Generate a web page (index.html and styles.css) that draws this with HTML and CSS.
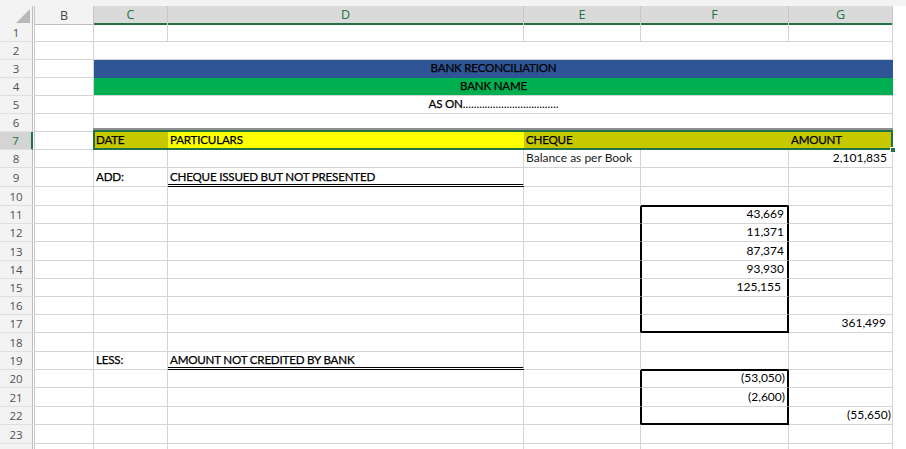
FILE: index.html
```html
<!DOCTYPE html>
<html>
<head>
<meta charset="utf-8">
<link rel="stylesheet" href="styles.css">
</head>
<body>
<div class="top"></div>
<div class="sheet">
  <div class="row hdr">
    <div class="corner"><svg width="14" height="14" viewBox="0 0 14 14"><polygon points="14,0 14,14 0,14" fill="#b9b9b9"/></svg></div>
    <div class="ch ca"></div>
    <div class="ch">B</div>
    <div class="ch sel">C</div>
    <div class="ch sel">D</div>
    <div class="ch sel">E</div>
    <div class="ch sel">F</div>
    <div class="ch sel">G</div>
    <div class="ch rest"></div>
  </div>

  <div class="row h19"><div class="rh">1</div><div class="a"></div><div class="c"></div><div class="c"></div><div class="c"></div><div class="c"></div><div class="c"></div><div class="c"></div><div class="rest"></div></div>
  <div class="row h18"><div class="rh">2</div><div class="a"></div><div class="c"></div><div class="c m"></div><div class="rest"></div></div>
  <div class="row h18"><div class="rh">3</div><div class="a"></div><div class="c"></div><div class="c m blue cap">BANK RECONCILIATION</div><div class="rest"></div></div>
  <div class="row h18"><div class="rh">4</div><div class="a"></div><div class="c"></div><div class="c m green cap">BANK NAME</div><div class="rest"></div></div>
  <div class="row h18"><div class="rh">5</div><div class="a"></div><div class="c"></div><div class="c m cap">AS ON<span class="dots">...................................</span></div><div class="rest"></div></div>
  <div class="row h18"><div class="rh">6</div><div class="a"></div><div class="c"></div><div class="c m"></div><div class="rest"></div></div>
  <div class="row h18">
    <div class="rh sel">7</div><div class="a"></div><div class="c"></div>
    <div class="selrange">
      <div class="c hc cap olive">DATE</div>
      <div class="c hc cap yellow">PARTICULARS</div>
      <div class="c hc cap olive">CHEQUE</div>
      <div class="c hc olive"></div>
      <div class="c hc cap olive">AMOUNT</div>
      <div class="selbox"></div>
      <div class="handle"></div>
    </div>
    <div class="rest"></div>
  </div>
  <div class="row h18"><div class="rh">8</div><div class="a"></div><div class="c"></div><div class="c"></div><div class="c"></div><div class="c lt">Balance as per Book</div><div class="c"></div><div class="c num gnum"><span class="p4">2,101,835</span></div><div class="rest"></div></div>
  <div class="row h19"><div class="rh">9</div><div class="a"></div><div class="c"></div><div class="c cap">ADD:</div><div class="c cap dbl">CHEQUE ISSUED BUT NOT PRESENTED</div><div class="c"></div><div class="c"></div><div class="c"></div><div class="rest"></div></div>
  <div class="row h19"><div class="rh">10</div><div class="a"></div><div class="c"></div><div class="c"></div><div class="c"></div><div class="c"></div><div class="c bkb"></div><div class="c"></div><div class="rest"></div></div>
  <div class="row h18"><div class="rh">11</div><div class="a"></div><div class="c"></div><div class="c"></div><div class="c"></div><div class="c bkr"></div><div class="c num box bt"><span class="p1">43,669</span></div><div class="c"></div><div class="rest"></div></div>
  <div class="row h18"><div class="rh">12</div><div class="a"></div><div class="c"></div><div class="c"></div><div class="c"></div><div class="c bkr"></div><div class="c num box"><span class="p1">11,371</span></div><div class="c"></div><div class="rest"></div></div>
  <div class="row h19"><div class="rh">13</div><div class="a"></div><div class="c"></div><div class="c"></div><div class="c"></div><div class="c bkr"></div><div class="c num box"><span class="p1">87,374</span></div><div class="c"></div><div class="rest"></div></div>
  <div class="row h18"><div class="rh">14</div><div class="a"></div><div class="c"></div><div class="c"></div><div class="c"></div><div class="c bkr"></div><div class="c num box"><span class="p1">93,930</span></div><div class="c"></div><div class="rest"></div></div>
  <div class="row h18"><div class="rh">15</div><div class="a"></div><div class="c"></div><div class="c"></div><div class="c"></div><div class="c bkr"></div><div class="c num box"><span class="p4">125,155</span></div><div class="c"></div><div class="rest"></div></div>
  <div class="row h18"><div class="rh">16</div><div class="a"></div><div class="c"></div><div class="c"></div><div class="c"></div><div class="c bkr"></div><div class="c num box"></div><div class="c"></div><div class="rest"></div></div>
  <div class="row h18"><div class="rh">17</div><div class="a"></div><div class="c"></div><div class="c"></div><div class="c"></div><div class="c bkr"></div><div class="c num box bb2"></div><div class="c num gnum"><span class="p5">361,499</span></div><div class="rest"></div></div>
  <div class="row h19"><div class="rh">18</div><div class="a"></div><div class="c"></div><div class="c"></div><div class="c"></div><div class="c"></div><div class="c"></div><div class="c"></div><div class="rest"></div></div>
  <div class="row h18"><div class="rh">19</div><div class="a"></div><div class="c"></div><div class="c cap">LESS:</div><div class="c cap dbl">AMOUNT NOT CREDITED BY BANK</div><div class="c"></div><div class="c bkb"></div><div class="c"></div><div class="rest"></div></div>
  <div class="row h18"><div class="rh">20</div><div class="a"></div><div class="c"></div><div class="c"></div><div class="c"></div><div class="c bkr"></div><div class="c num box bt">(53,050)</div><div class="c"></div><div class="rest"></div></div>
  <div class="row h19"><div class="rh">21</div><div class="a"></div><div class="c"></div><div class="c"></div><div class="c"></div><div class="c bkr"></div><div class="c num box">(2,600)</div><div class="c"></div><div class="rest"></div></div>
  <div class="row h18"><div class="rh">22</div><div class="a"></div><div class="c"></div><div class="c"></div><div class="c"></div><div class="c bkr"></div><div class="c num box bb2"></div><div class="c num gnum">(55,650)</div><div class="rest"></div></div>
  <div class="row h19"><div class="rh">23</div><div class="a"></div><div class="c"></div><div class="c"></div><div class="c"></div><div class="c"></div><div class="c"></div><div class="c"></div><div class="rest"></div></div>
  <div class="row h18"><div class="rh">24</div><div class="a"></div><div class="c"></div><div class="c"></div><div class="c"></div><div class="c"></div><div class="c"></div><div class="c"></div><div class="rest"></div></div>
</div>
</body>
</html>
```
FILE: styles.css
```css
* { box-sizing: border-box; }
html, body { margin: 0; padding: 0; }
body {
  width: 906px;
  height: 449px;
  overflow: hidden;
  background: #ffffff;
  font-family: Lato, "Liberation Sans", sans-serif;
}
.top { height: 6px; background: #f3f3f3; }
.row {
  display: grid;
  grid-template-columns: 33px 2px 59px 74px 356px 117px 148px 104px 13px;
}
.hdr { height: 17px; }
.h18 { height: 18px; }
.h19 { height: 19px; }

.corner {
  background: #f3f3f3;
  border-right: 1px solid #bdbdbd;
  border-bottom: 1px solid #bdbdbd;
  display: flex;
  align-items: flex-end;
  justify-content: flex-end;
  padding: 0 2px 1px 0;
}
.corner svg { display: block; }
.ch {
  background: #f3f3f3;
  border-right: 1px solid #c6c6c6;
  border-bottom: 1px solid #bdbdbd;
  display: flex;
  align-items: center;
  justify-content: center;
  font-family: "Open Sans", "Liberation Sans", sans-serif;
  font-size: 12.5px;
  color: #444444;
}
.ch.sel {
  background: #dadada;
  color: #217346;
  border-bottom: 2px solid #217346;
}
.ch.rest { border-right: none; border-bottom: none; }

.rh {
  background: #f3f3f3;
  border-right: 1px solid #bdbdbd;
  border-bottom: 1px solid #dedede;
  display: flex;
  align-items: center;
  justify-content: center;
  font-family: "Open Sans", "Liberation Sans", sans-serif;
  font-size: 11.5px;
  color: #505050;
}
.rh.sel {
  background: #d4d4d4;
  color: #217346;
  border-right: 2px solid #217346;
}
.a { border-right: 1px solid #c8c8c8; background: #ffffff; }
.rest { background: #ffffff; }

.c {
  border-right: 1px solid #d4d4d4;
  border-bottom: 1px solid #d4d4d4;
  display: flex;
  align-items: flex-end;
  padding: 0 1px 2px 2px;
  font-size: 12px;
  line-height: 14px;
  white-space: nowrap;
  color: #000000;
  min-width: 0;
}
.cap { font-size: 11.6px; letter-spacing: -0.2px; -webkit-text-stroke: 0.25px #000000; }
.dots { letter-spacing: 0; -webkit-text-stroke: 0; }
.lt { color: #1a1a1a; }
.num { justify-content: flex-end; }
.m { grid-column: span 5; justify-content: center; }
.blue { background: #2f5597; border-bottom-color: #2f5597; border-right-color: #2f5597; }
.green { background: #00b050; border-right-color: #00b050; }
.dbl { border-bottom: 3px double #000000; padding-bottom: 0; }
.bkb { border-bottom-color: #000000; }
.bkr { border-right-color: #000000; }
.box { border-left: 1px solid #000000; border-right: 2px solid #000000; padding-right: 2px; }
.bt { border-top: 1px solid #000000; }
.bb2 { border-bottom: 2px solid #000000; }
.p1 { margin-right: 1px; }
.p4 { margin-right: 4px; }
.p5 { margin-right: 5px; }

.selrange {
  grid-column: span 5;
  display: grid;
  grid-template-columns: 74px 356px 117px 148px 104px;
  position: relative;
}
.hc { border-right: none; border-bottom: 1px solid #1d1d1d; }
.olive { background: #c8c800; }
.yellow { background: #ffff00; }
.selbox {
  position: absolute;
  left: -1px;
  top: -2px;
  right: 0;
  bottom: 0;
  border: 2px solid #217346;
  box-shadow: 0 -2px 0 0 #8e8e8e;
  pointer-events: none;
}
.handle {
  position: absolute;
  right: -3px;
  bottom: -3px;
  width: 6px;
  height: 6px;
  background: #217346;
  border: 1px solid #ffffff;
}
```
